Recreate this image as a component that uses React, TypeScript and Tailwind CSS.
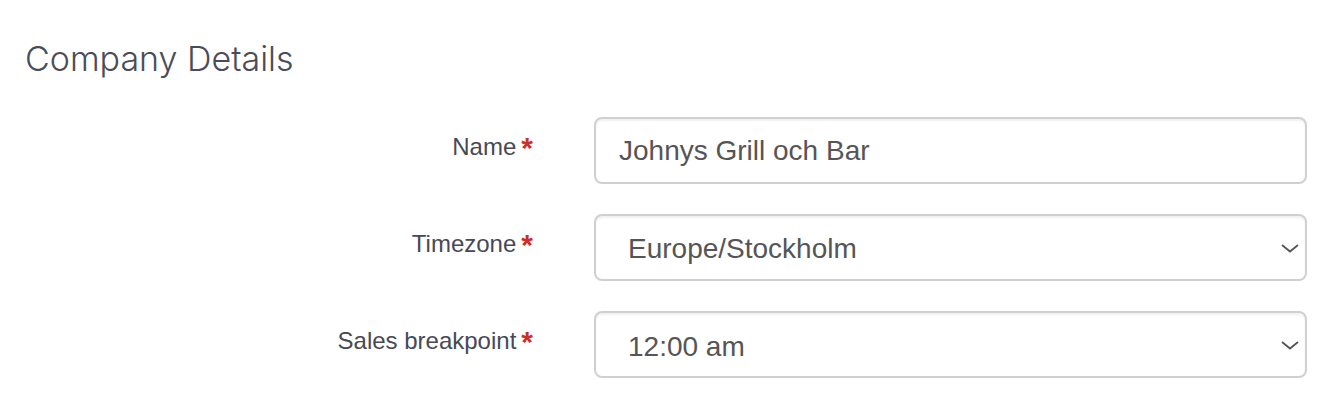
import React from "react"

const labelFont = { fontFamily: '"Liberation Sans", Arial, sans-serif' }

function Label({ text }: { text: string }) {
  return (
    <div className="w-[508px] shrink-0 flex justify-end items-start pt-[18px]">
      <span className="text-[24px] leading-[24px] text-[#474955]">{text}</span>
      <span className="ml-[5px] -mt-[2px] text-[30px] leading-[30px] font-bold text-[#cf2e26]">*</span>
    </div>
  )
}

function Chevron() {
  return (
    <svg
      className="absolute right-[7px] top-1/2 -translate-y-1/2 pointer-events-none"
      width="20"
      height="10"
      viewBox="0 0 20 10"
      fill="none"
    >
      <polyline points="2,2 10,8.5 18,2" stroke="#555" strokeWidth="1.8" />
    </svg>
  )
}

const fieldCls =
  "w-full h-full border-2 border-[#d0d0d0] rounded-[8px] text-[28px] text-[#555] bg-white shadow-[inset_0_2px_2px_rgba(0,0,0,0.06)] outline-none"

export default function App() {
  return (
    <div className="w-[1334px] h-[394px] bg-white pl-[25px] pt-[37px]" style={labelFont}>
      <h2
        className="text-[34px] leading-[44px] font-light text-[#4b4c57]"
        style={{ fontFamily: 'Inter, "Liberation Sans", sans-serif' }}
      >
        Company Details
      </h2>

      <div className="mt-[36px] flex flex-col gap-[30px]">
        {/* Name */}
        <div className="flex items-start">
          <Label text="Name" />
          <div className="ml-[61px] w-[713px] h-[67px]">
            <input className={fieldCls + " pl-[23px]"} defaultValue="Johnys Grill och Bar" />
          </div>
        </div>

        {/* Timezone */}
        <div className="flex items-start">
          <Label text="Timezone" />
          <div className="relative ml-[61px] w-[713px] h-[67px]">
            <select className={fieldCls + " appearance-none pl-[32px] pt-[2px]"} defaultValue="Europe/Stockholm">
              <option>Europe/Stockholm</option>
            </select>
            <Chevron />
          </div>
        </div>

        {/* Sales breakpoint */}
        <div className="flex items-start">
          <Label text="Sales breakpoint" />
          <div className="relative ml-[61px] w-[713px] h-[67px]">
            <select className={fieldCls + " appearance-none pl-[32px] pt-[4px]"} defaultValue="12:00 am">
              <option>12:00 am</option>
            </select>
            <Chevron />
          </div>
        </div>
      </div>
    </div>
  )
}
